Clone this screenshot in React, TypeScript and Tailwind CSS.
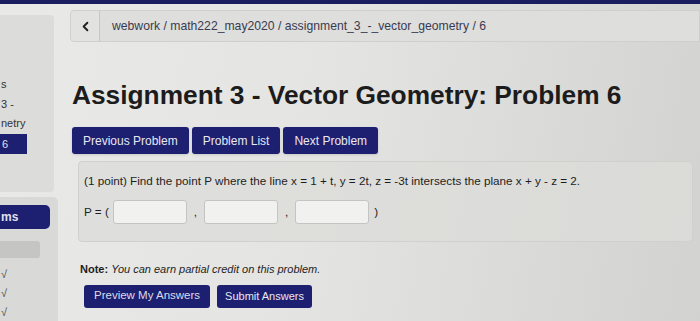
import { ChevronLeft } from "lucide-react";

const NavButton = ({ label }: { label: string }) => (
  <button className="h-[27px] rounded-[3px] bg-[#1d1f70] px-[11px] text-[12px] text-[#e8e8f0] shadow-sm">
    {label}
  </button>
);

const AnswerInput = () => (
  <div className="h-[24px] w-[74px] rounded-[3px] border border-[#c4c4c2] bg-[#f1f1ef]" />
);

export default function App() {
  return (
    <div
      className="relative h-[321px] w-[700px] overflow-hidden bg-[linear-gradient(100deg,#e9e9e7_0%,#e4e4e2_45%,#d2d2d0_100%)] text-[#1b1b1b]"
      style={{ fontFamily: '"Liberation Sans", Arial, sans-serif' }}
    >
      <div className="h-[4px] w-full bg-[#1a1d5e]" />
      <div className="flex">
        {/* sidebar */}
        <aside className="flex w-[58px] shrink-0 flex-col pt-[11px]">
          <div className="flex h-[177px] w-[54px] flex-col rounded-r-[4px] bg-[#dcdcdb] pt-[59px] text-[11px] text-[#333]">
            <div className="pl-[1px] leading-[20px]">s</div>
            <div className="pl-[1px] leading-[20px]">3 -</div>
            <div className="pl-[1px] leading-[19px]">netry</div>
            <div className="mt-[1px] flex h-[20px] w-[27px] items-center bg-[#1d1f70] pl-[2px] text-[#e0e0ea]">
              6
            </div>
          </div>
          <div className="mt-[5px] flex h-[130px] w-[58px] flex-col rounded-tr-[5px] bg-[#d9d9d8] pt-[8px]">
            <div className="flex h-[24px] w-[50px] items-center rounded-r-[5px] bg-[#1d1f70] pl-[1px] text-[12px] font-bold text-[#e0e0ea]">
              ms
            </div>
            <div className="mt-[12px] h-[17px] w-[40px] rounded-r-[3px] bg-[#c5c5c4]" />
            <div className="mt-[10px] flex flex-col gap-[6px] pl-[1px] text-[11px] leading-[13px] text-[#444]">
              <span>√</span>
              <span>√</span>
              <span>√</span>
            </div>
          </div>
        </aside>

        {/* main */}
        <main className="flex-1 pl-[12px]">
          <div className="mt-[6px] flex h-[32px] items-stretch rounded-l-[4px] border border-[#cfcfcd] bg-[#dededc]">
            <div className="flex w-[29px] items-center justify-center rounded-l-[4px] border-r border-[#c6c6c4] bg-[#e2e2e0]">
              <ChevronLeft size={15} strokeWidth={3} className="text-[#222]" />
            </div>
            <div className="flex items-center pl-[12px] text-[12.2px] text-[#3a3a50]">
              webwork / math222_may2020 / assignment_3_-_vector_geometry / 6
            </div>
          </div>

          <h1 className="mt-[38px] pl-[2px] text-[26.3px] font-bold leading-[30px] text-[#1c1c1c]">
            Assignment 3 - Vector Geometry: Problem 6
          </h1>

          <div className="mt-[17px] flex gap-[3px] pl-[2px]">
            <NavButton label="Previous Problem" />
            <NavButton label="Problem List" />
            <NavButton label="Next Problem" />
          </div>

          <div className="ml-[8px] mr-[7px] mt-[7px] h-[81px] rounded-[4px] border border-[#d0d0ce] bg-[#dcdcda]/80 pl-[5px] pt-[10px] text-[11.7px] text-[#1e1e1e]">
            <p>(1 point) Find the point P where the line x = 1 + t, y = 2t, z = -3t intersects the plane x + y - z = 2.</p>
            <div className="mt-[10px] flex items-center">
              <span className="mr-[4px]">P = (</span>
              <AnswerInput />
              <span className="mx-[7px]">,</span>
              <AnswerInput />
              <span className="mx-[7px]">,</span>
              <AnswerInput />
              <span className="ml-[5px]">)</span>
            </div>
          </div>

          <p className="mt-[19px] pl-[10px] text-[11px] text-[#1e1e1e]">
            <span className="font-bold">Note:</span> <i>You can earn partial credit on this problem.</i>
          </p>

          <div className="mt-[7px] flex gap-[7px] pl-[14px]">
            <button className="h-[23px] rounded-[3px] bg-[#1d1f70] px-[10px] text-[11.5px] text-[#dcdce8]">
              Preview My Answers
            </button>
            <button className="h-[23px] rounded-[3px] bg-[#1d1f70] px-[8px] text-[11px] text-[#e8e8f0]">
              Submit Answers
            </button>
          </div>
        </main>
      </div>
    </div>
  );
}
